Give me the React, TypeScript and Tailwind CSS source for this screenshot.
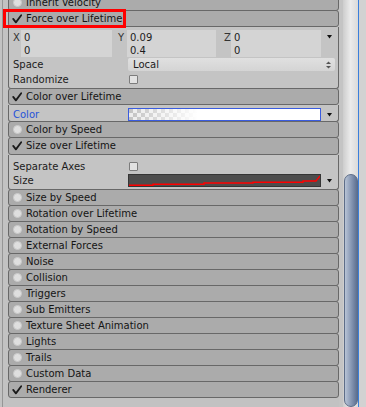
import React from "react";

const Check = () => (
  <svg width="10" height="10" viewBox="0 0 10 10" className="block">
    <path
      d="M1.2 4.9 L3.9 8.4 L9.2 1.3"
      fill="none"
      stroke="#1a1a1a"
      strokeWidth="1.8"
      strokeLinecap="round"
      strokeLinejoin="round"
    />
  </svg>
);

const Dot = () => (
  <div className="w-[9px] h-[9px] rounded-full bg-[#dfdfdf] border border-[#cacaca]" />
);

const Arrow = () => (
  <svg width="5" height="4" viewBox="0 0 5 4" className="block">
    <polygon points="0,0 5,0 2.5,3.5" fill="#111" />
  </svg>
);

function Header({ label, on, tall }: { label: string; on?: boolean; tall?: boolean }) {
  return (
    <div
      className={
        tall
          ? "-mt-px h-[18px] shrink-0 flex items-center rounded-[3px] border border-[#686868] bg-[#ababab]"
          : "-mt-px h-[17px] shrink-0 flex items-center rounded-[3px] border border-[#686868] bg-[#ababab]"
      }
    >
      <div className="ml-[3px] w-[10px] flex justify-center items-center">{on ? <Check /> : <Dot />}</div>
      <span className="ml-[4px] text-[#141414] leading-none whitespace-nowrap">{label}</span>
    </div>
  );
}

function Field({ a, b, w }: { a: string; b: string; w: string }) {
  return (
    <div className={w + " h-[27px] bg-[#d4d4d4] flex flex-col pl-[3px]"}>
      <div className="h-[13px] leading-[13px] pt-px">{a}</div>
      <div className="h-[13px] leading-[13px] pt-px">{b}</div>
    </div>
  );
}

const Checkbox = () => (
  <div className="w-[9px] h-[9px] border border-[#7c7c7c] bg-[#e2e2e2] rounded-[1px]" />
);

export default function App() {
  const collapsed = [
    "Size by Speed",
    "Rotation over Lifetime",
    "Rotation by Speed",
    "External Forces",
    "Noise",
    "Collision",
    "Triggers",
    "Sub Emitters",
    "Texture Sheet Animation",
    "Lights",
    "Trails",
    "Custom Data",
  ];
  return (
    <div className="relative w-[366px] h-[407px] overflow-hidden bg-[#c2c2c2] flex font-['DejaVu_Sans',sans-serif] text-[10px] text-[#1c1c1c]">
      {/* left column */}
      <div className="w-[339px] pl-[2px] flex">
        <div className="flex-1 border-l border-[#969696] pl-[5px]">
          <div className="w-[331px] mt-[-5px] flex flex-col">
            <Header label="Inherit Velocity" />
            <Header label="Force over Lifetime" on />
            <div className="border-x border-b border-[#686868] rounded-b-[3px] bg-[#c4c4c4] pl-[4px] pt-[3px] pb-[2px]">
              <div className="h-[27px] flex">
                <div className="w-[8px] leading-[13px] pt-px text-[#333]">X</div>
                <Field a="0" b="0" w="w-[91px]" />
                <div className="ml-[6px] w-[9px] leading-[13px] pt-px text-[#333]">Y</div>
                <Field a="0.09" b="0.4" w="w-[89px]" />
                <div className="ml-[8px] w-[7px] leading-[13px] pt-px text-[#333]">Z</div>
                <Field a="0" b="0" w="w-[90px]" />
                <div className="w-[17px] flex justify-center pt-[5px]">
                  <Arrow />
                </div>
              </div>
              <div className="mt-px h-[13px] flex items-center">
                <div className="w-[115px]">Space</div>
                <div className="w-[207px] h-[13px] rounded-[2px] bg-linear-to-b from-[#e0e0e0] to-[#d4d4d4] flex items-center pl-[5px] pr-[4px]">
                  <span className="flex-1 leading-none">Local</span>
                  <svg width="5" height="8" viewBox="0 0 5 8" className="block">
                    <polygon points="0,3 5,3 2.5,0.5" fill="#555" />
                    <polygon points="0,5 5,5 2.5,7.5" fill="#555" />
                  </svg>
                </div>
              </div>
              <div className="mt-[2px] h-[13px] flex items-center">
                <div className="w-[115px]">Randomize</div>
                <div className="ml-px">
                  <Checkbox />
                </div>
              </div>
            </div>
            <Header label="Color over Lifetime" on />
            <div className="border-x border-b border-[#686868] rounded-b-[3px] bg-[#c4c4c4] pl-[4px] pt-[3px]">
              <div className="h-[13px] flex items-center">
                <div className="w-[115px] text-[#2653d9]">Color</div>
                <div className="w-[193px] h-[13px] border border-[#3a5ce0]">
                  <svg width="191" height="11" className="block">
                    <defs>
                      <pattern id="chk" width="8" height="8" patternUnits="userSpaceOnUse">
                        <rect width="8" height="8" fill="#ececec" />
                        <rect width="4" height="4" fill="#c2c2c2" />
                        <rect x="4" y="4" width="4" height="4" fill="#c2c2c2" />
                      </pattern>
                      <linearGradient id="fade" x1="0" x2="1" y1="0" y2="0">
                        <stop offset="0" stopColor="#ffffff" stopOpacity="0" />
                        <stop offset="0.36" stopColor="#ffffff" stopOpacity="1" />
                        <stop offset="1" stopColor="#ffffff" stopOpacity="1" />
                      </linearGradient>
                    </defs>
                    <rect width="191" height="11" fill="url(#chk)" />
                    <rect width="191" height="11" fill="url(#fade)" />
                  </svg>
                </div>
                <div className="w-[17px] flex justify-center">
                  <Arrow />
                </div>
              </div>
            </div>
            <Header label="Color by Speed" />
            <Header label="Size over Lifetime" on tall />
            <div className="border-x border-b border-[#686868] rounded-b-[3px] bg-[#c4c4c4] pl-[4px] pt-[5px] pb-[2px]">
              <div className="h-[13px] flex items-center">
                <div className="w-[115px]">Separate Axes</div>
                <div className="ml-px">
                  <Checkbox />
                </div>
              </div>
              <div className="mt-px h-[13px] flex items-center">
                <div className="w-[115px]">Size</div>
                <div className="w-[193px] h-[13px] border border-[#353535] bg-[#4d4d4d]">
                  <svg width="191" height="11" className="block">
                    <polyline
                      points="0,10.3 24,10.3 24,9.2 75,9.2 75,8 124,8 124,7.3 174,7.3 174,6 187,6 191,1"
                      fill="none"
                      stroke="#ff0000"
                      strokeWidth="1.4"
                    />
                  </svg>
                </div>
                <div className="w-[17px] flex justify-center">
                  <Arrow />
                </div>
              </div>
            </div>
            {collapsed.map((l) => (
              <Header key={l} label={l} />
            ))}
            <Header label="Renderer" on />
          </div>
        </div>
      </div>
      {/* scrollbar column */}
      <div className="w-[27px] h-full flex">
        <div className="w-[4px] bg-[#c4c4c4]" />
        <div className="w-[15px] h-full bg-linear-to-r from-[#cdcdcd] via-[#ebebeb] to-[#dadada] flex flex-col items-center">
          <div className="mt-[174px] w-[14px] flex-1 rounded-t-[7px] rounded-b-[7px] border border-[#5d6d88] bg-linear-to-r from-[#b8c4d6] via-[#8999b5] to-[#5c6f90]" />
        </div>
        <div className="w-px bg-[#3a7fdc]" />
        <div className="w-[7px] bg-[#d2d2d2]" />
      </div>
      {/* annotation box */}
      <div className="absolute left-[3px] top-[9px] w-[123px] h-[19px] border-[3px] border-[#ff0000]" />
    </div>
  );
}
